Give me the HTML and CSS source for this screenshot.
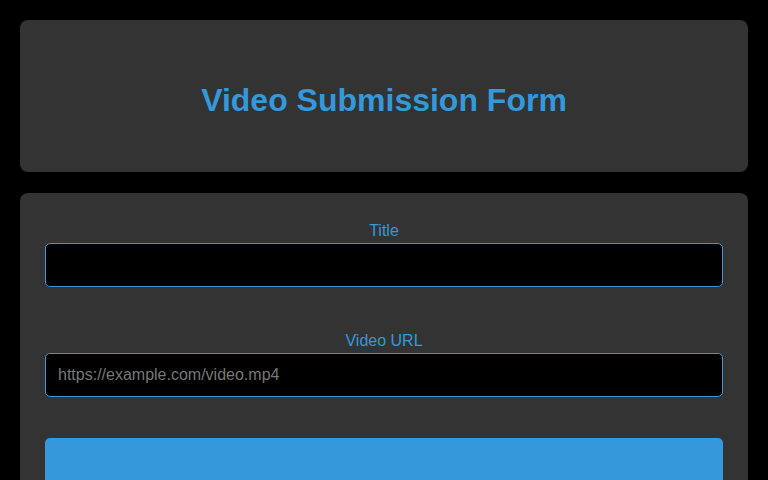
FILE: index.html
```html
<!DOCTYPE html>
<html lang="en">
<head>
  <meta charset="UTF-8">
  <meta name="viewport" content="width=device-width, initial-scale=1.0">
  <title>Video Submission Form</title>
  <link rel="stylesheet" href="styles.css">
</head>
<body>
  <header class="page-header">
    <h1>Video Submission Form</h1>
  </header>

  <form class="form-card" onsubmit="return false;">
    <div class="form-group">
      <label for="title">Title</label>
      <input type="text" id="title" name="title">
    </div>
    <div class="form-group">
      <label for="videoUrl">Video URL</label>
      <input type="url" id="videoUrl" name="videoUrl" placeholder="https://example.com/video.mp4">
    </div>
    <button type="submit" class="submit-btn">Submit Video</button>
  </form>
</body>
</html>
```

FILE: styles.css
```css
/* Base */
html {
  box-sizing: border-box;
}
*, *:before, *:after {
  box-sizing: inherit;
}
body {
  margin: 0;
  padding: 20px;
  background-color: #000;
  color: #3498db;
  font-family: "Liberation Sans", Arial, sans-serif;
  font-size: 16px;
}

/* Header card */
.page-header {
  background-color: #333;
  border-radius: 8px;
  padding: 41px 25px 32px;
  margin-bottom: 21px;
  text-align: center;
}
.page-header h1 {
  margin: 21px 0;
  font-size: 32px;
  font-weight: bold;
  color: #3498db;
}

/* Form card */
.form-card {
  background-color: #333;
  border-radius: 8px;
  padding: 25px;
}
.form-group {
  margin-bottom: 41px;
  text-align: center;
}
.form-group label {
  display: block;
  line-height: 24px;
  padding-top: 1px;
  color: #3498db;
}
.form-group input {
  display: block;
  width: 100%;
  padding: 12px;
  font-family: inherit;
  font-size: 16px;
  color: #ddd;
  background-color: #000;
  border: 1px solid #3498db;
  border-radius: 5px;
  outline: none;
}
.form-group input::placeholder {
  color: #777;
}

/* Submit button */
.submit-btn {
  display: block;
  width: 100%;
  padding: 50px 0;
  font-family: inherit;
  font-size: 18px;
  color: #fff;
  background-color: #3498db;
  border: none;
  border-radius: 5px;
  cursor: pointer;
}
```
